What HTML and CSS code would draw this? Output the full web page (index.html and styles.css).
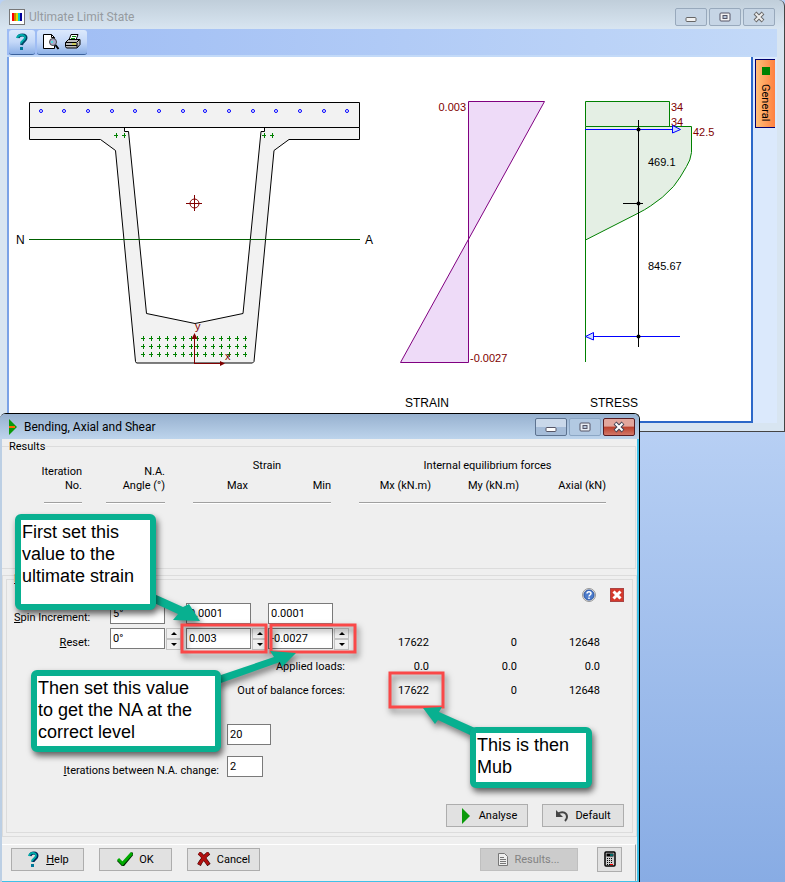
FILE: index.html
```
<!DOCTYPE html>
<html lang="en">
<head>
    <meta charset="UTF-8">
    <title>Ultimate Limit State</title>
    <link rel="stylesheet" href="styles.css">
</head>
<body>
<div class="desktop">

    <div class="window main-window">
        <div class="title-bar inactive">
            <svg class="title-icon" width="16" height="16" viewBox="0 0 16 16">
                <rect x="0.5" y="0.5" width="15" height="15" fill="#fff" stroke="#777"/>
                <path d="M3 4h2v8H3z" fill="#f00"/>
                <path d="M5 4h2v8H5z" fill="#c80"/>
                <path d="M7 4h2v8H7z" fill="#dd0"/>
                <path d="M9 4h2v8H9z" fill="#0cc"/>
                <path d="M11 4h2v8h-2z" fill="#009"/>
            </svg>
            <span class="title-text">Ultimate Limit State</span>
            <div class="title-buttons">
                <button type="button" aria-label="Minimize"><svg width="12" height="12" viewBox="0 0 12 12"><rect x="1" y="6.5" width="10" height="4" rx="1" fill="#f2f2f2" stroke="#666"/></svg></button>
                <button type="button" aria-label="Maximize"><svg width="12" height="12" viewBox="0 0 12 12"><rect x="1" y="2" width="10" height="8" rx="1" fill="#f2f2f2" stroke="#556"/><rect x="4" y="4.5" width="4" height="3" fill="#b8c8dc" stroke="#556"/></svg></button>
                <button type="button" aria-label="Close"><svg width="12" height="12" viewBox="0 0 12 12"><path d="M2 2l8 8M10 2l-8 8" stroke="#666" stroke-width="4"/><path d="M2.500 2.500l7 7M9.500 2.500l-7 7" stroke="#eee" stroke-width="2"/></svg></button>
            </div>
        </div>
        <div class="toolbar">
            <div class="tool-group">
                <button type="button" aria-label="Help">
                    <svg width="16" height="18" viewBox="0 0 16 18"><path d="M4 5C5 1 12 1 12 5c0 3-4 3-4.500 7" fill="none" stroke="#046" stroke-width="3"/><path d="M3 5C4 1 11 1 11 4.500c0 3-4 3-4 6" fill="none" stroke="#0aa" stroke-width="2"/><path d="M6 14h3v3H6z" fill="#079"/></svg>
                </button>
            </div>
            <div class="tool-group">
                <button type="button" aria-label="Print preview">
                    <svg width="18" height="18" viewBox="0 0 18 18"><path d="M1.500 1.500h8l3 3v11h-11z" fill="#fff" stroke="#000"/><path d="M9.500 1.500v3h3" fill="none" stroke="#000"/><circle cx="11" cy="9" r="3.500" fill="#aac" stroke="#444"/><path d="M9 8h2v2H9z" fill="#5dd"/><path d="M13.500 12l3 4" stroke="#000" stroke-width="2"/></svg>
                </button>
                <button type="button" aria-label="Print">
                    <svg width="18" height="18" viewBox="0 0 18 18"><path d="M5 7l2-5.500h7L12 7" fill="#fff" stroke="#000"/><path d="M8 3.500h4M7 5.500h4" stroke="#080"/><path d="M1.500 9.500l3-3H16v5l-3 3.500H2.500l-1-1.500z" fill="#bbb" stroke="#000"/><path d="M1.500 9.500h11l3-3M2 12.500h11M13 10v4.500" fill="none" stroke="#000"/><path d="M8 11h4" stroke="#dd0"/></svg>
                </button>
            </div>
        </div>
        <div class="work-area">
            <div class="canvas">
                <svg class="drawing" width="742" height="365" viewBox="9 57 742 365">
                    <defs>
                        <pattern id="strand" x="139" y="334" width="8" height="8" patternUnits="userSpaceOnUse">
                            <path d="M2 4.500h4M4.500 2v5" stroke="#008000"/>
                        </pattern>
                    </defs>

                    <!-- beam and slab -->
                    <g fill="#f2f2f2" stroke="#000">
                        <path d="M29.500 127.500v12h71l15 11 20 211 1 1.500h116l1.500-1.500 20-211 15-11h70.500v-12z"/>
                        <path d="M124.500 127.500v4h4l18 182 48.500 10 48-10 18-182h3.500v-4z" fill="#fff"/>
                        <path d="M29.500 102.500h330v25h-330z"/>
                    </g>
                    <g fill="#fff" stroke="#0000ff">
                        <circle cx="41" cy="111" r="1.500"/><circle cx="64" cy="111" r="1.500"/>
                        <circle cx="88" cy="111" r="1.500"/><circle cx="112" cy="111" r="1.500"/>
                        <circle cx="135" cy="111" r="1.500"/><circle cx="159" cy="111" r="1.500"/>
                        <circle cx="183" cy="111" r="1.500"/><circle cx="205" cy="111" r="1.500"/>
                        <circle cx="229" cy="111" r="1.500"/><circle cx="253" cy="111" r="1.500"/>
                        <circle cx="276" cy="111" r="1.500"/><circle cx="300" cy="111" r="1.500"/>
                        <circle cx="324" cy="111" r="1.500"/><circle cx="347" cy="111" r="1.500"/>
                    </g>
                    <path d="M114 135.500h4M116.500 133v5M122 135.500h4M124.500 133v5M262 135.500h4M264.500 133v5M270 135.500h4M272.500 133v5" stroke="#008000"/>
                    <rect x="139" y="334" width="56" height="24" fill="url(#strand)"/>
                    <g transform="translate(54 0)"><rect x="139" y="334" width="56" height="24" fill="url(#strand)"/></g>

                    <!-- neutral axis, centroid, axes -->
                    <path d="M29 239.500h331" stroke="#006000"/>
                    <g stroke="#800000" fill="none">
                        <circle cx="194.500" cy="203.500" r="4.500"/>
                        <path d="M186 203.500h16M194.500 195v16M194.500 363V336M194 363.500h27"/>
                        <path d="M194.500 333l3 6h-6zM225 363.500l-5-2.500v5z" fill="#800000" stroke="none"/>
                    </g>
                    <g class="axis-label">
                        <text x="16" y="244">N</text>
                        <text x="365" y="244">A</text>
                    </g>
                    <g class="value">
                        <text x="195" y="330">y</text>
                        <text x="225" y="360">x</text>
                    </g>

                    <!-- strain -->
                    <path d="M468.500 101.500h76l-144 261h68z" fill="#eedbf8" stroke="#800080"/>
                    <g class="value">
                        <text x="466" y="111" text-anchor="end">0.003</text>
                        <text x="470" y="362">-0.0027</text>
                    </g>

                    <!-- stress -->
                    <g fill="#e4efe4" stroke="#008000">
                        <path d="M585.500 101.500h84v25h-84z"/>
                        <path d="M585.500 126.500h106v26q-1 8-5 14-6 11-13 20-11 12-23 19.500-6 4-12 7l-53 27z"/>
                        <path d="M585.500 239v123"/>
                    </g>
                    <g class="value">
                        <text x="671" y="111">34</text>
                        <text x="671" y="126">34</text>
                        <text x="693" y="136">42.5</text>
                    </g>
                    <g stroke="#0000ff" fill="#ccdcff">
                        <path d="M585 129.500h88M594 336.500h86"/>
                        <path d="M672.500 125.500v7.500l8-3.500zM593.500 332.500v7.500l-8-3.500z"/>
                    </g>
                    <path d="M638.500 120v227M623 203.500h20" stroke="#000"/>
                    <circle cx="638.500" cy="129.500" r="2"/>
                    <circle cx="638.500" cy="203.500" r="2"/>
                    <circle cx="638.500" cy="336.500" r="2"/>
                    <g class="dimension">
                        <text x="648" y="166">469.1</text>
                        <text x="648" y="270">845.67</text>
                    </g>
                    <g class="axis-label">
                        <text x="405" y="407">STRAIN</text>
                        <text x="590" y="407">STRESS</text>
                    </g>
                </svg>
            </div>
            <div class="side-tabs">
                <button type="button" class="side-tab"><span class="tab-mark"></span>General</button>
            </div>
        </div>
    </div>

    <div class="window dialog">
        <div class="title-bar">
            <svg class="title-icon" width="16" height="16" viewBox="0 0 16 16">
                <path d="M2 0l8 8-8 8z" fill="#0a9a0a"/>
                <path d="M2 7h6v2H2z" fill="#f60"/>
            </svg>
            <span class="title-text">Bending, Axial and Shear</span>
            <div class="title-buttons">
                <button type="button" aria-label="Minimize"><svg width="12" height="12" viewBox="0 0 12 12"><rect x="1" y="6.500" width="10" height="4" rx="1" fill="#fff" stroke="#556"/></svg></button>
                <button type="button" class="dim" aria-label="Maximize"><svg width="12" height="12" viewBox="0 0 12 12"><rect x="1" y="2" width="10" height="8" rx="1" fill="#e8eef4" stroke="#556"/><rect x="4" y="4.500" width="4" height="3" fill="#b8c8dc" stroke="#556"/></svg></button>
                <button type="button" class="close" aria-label="Close"><svg width="12" height="12" viewBox="0 0 12 12"><path d="M2 2l8 8M10 2l-8 8" stroke="#445" stroke-width="4"/><path d="M2.500 2.500l7 7M9.500 2.500l-7 7" stroke="#fff" stroke-width="2"/></svg></button>
            </div>
        </div>

        <fieldset class="results">
            <legend>Results</legend>
            <table class="results-table">
                <colgroup>
                    <col class="col-iteration"><col class="col-angle"><col class="col-strain"><col class="col-strain">
                    <col class="col-mx"><col class="col-my"><col class="col-axial">
                </colgroup>
                <tr>
                    <th rowspan="2">Iteration<br>No.</th>
                    <th rowspan="2">N.A.<br>Angle (°)</th>
                    <th colspan="2" class="group">Strain</th>
                    <th colspan="3" class="group">Internal equilibrium forces</th>
                </tr>
                <tr>
                    <th>Max</th>
                    <th>Min</th>
                    <th>Mx (kN.m)</th>
                    <th>My (kN.m)</th>
                    <th>Axial (kN)</th>
                </tr>
                <tr class="rules">
                    <td class="first"><hr></td>
                    <td class="second"><hr></td>
                    <td colspan="2"><hr></td>
                    <td colspan="3"><hr></td>
                </tr>
            </table>
        </fieldset>

        <fieldset class="settings">
            <legend><u>I</u></legend>
            <div class="corner-buttons">
                <button type="button" aria-label="Help on iteration">
                    <svg width="14" height="14" viewBox="0 0 14 14"><circle cx="7" cy="7" r="6.500" fill="#ddd" stroke="#999"/><circle cx="7" cy="7" r="5" fill="#4c7ccc" stroke="#2a55a5"/><path d="M5 5.500c0-2.500 4-2.500 4 0 0 1.500-2 1.500-2 3M7 9.500v1.500" fill="none" stroke="#fff" stroke-width="1.500"/></svg>
                </button>
                <button type="button" aria-label="Close panel">
                    <svg width="14" height="14" viewBox="0 0 14 14"><rect x="0.500" y="0.500" width="13" height="13" fill="#d5392c" stroke="#a44"/><path d="M3.500 3.500l7 7M10.500 3.500l-7 7" stroke="#fff" stroke-width="3"/></svg>
                </button>
            </div>
            <div class="form-grid">
                <label for="spin-angle"><u>S</u>pin Increment:</label>
                <input type="text" id="spin-angle" class="angle" value="5°">
                <input type="text" value="0.0001" aria-label="Maximum strain increment">
                <input type="text" value="0.0001" aria-label="Minimum strain increment">

                <label for="reset-angle" class="row-start"><u>R</u>eset:</label>
                <div class="spin-field">
                    <input type="text" id="reset-angle" class="angle" value="0°">
                    <div class="spinner"><button type="button" class="up" aria-label="Angle up"></button><button type="button" class="down" aria-label="Angle down"></button></div>
                </div>
                <div class="spin-field">
                    <input type="text" value="0.003" aria-label="Maximum strain">
                    <div class="spinner"><button type="button" class="up" aria-label="Maximum strain up"></button><button type="button" class="down" aria-label="Maximum strain down"></button></div>
                </div>
                <div class="spin-field">
                    <input type="text" value="-0.0027" aria-label="Minimum strain">
                    <div class="spinner"><button type="button" class="up" aria-label="Minimum strain up"></button><button type="button" class="down" aria-label="Minimum strain down"></button></div>
                </div>
                <output>17622</output>
                <output>0</output>
                <output>12648</output>

                <span class="row-label">Applied loads:</span>
                <output>0.0</output>
                <output>0.0</output>
                <output>0.0</output>

                <span class="row-label">Out of balance forces:</span>
                <output>17622</output>
                <output>0</output>
                <output>12648</output>
            </div>
            <div class="limits">
                <input type="text" class="iterations" value="20" aria-label="Maximum iterations">
                <label for="na-change"><u>I</u>terations between N.A. change:</label>
                <input type="text" id="na-change" class="na-change" value="2">
            </div>
            <div class="settings-buttons">
                <button type="button" class="button">
                    <svg width="16" height="16" viewBox="0 0 16 16"><path d="M5 0l8 8-8 8z" fill="#0a9a0a"/></svg>
                    Analyse
                </button>
                <button type="button" class="button">
                    <svg width="14" height="14" viewBox="0 0 14 14"><path d="M3 4.500C8 1.500 12 4 12 8c0 2-1 3-2 4" fill="none" stroke="#444" stroke-width="2"/><path d="M1 1v7h7z" fill="#444"/></svg>
                    Default
                </button>
            </div>
        </fieldset>

        <div class="button-bar">
            <button type="button" class="button">
                <svg width="14" height="16" viewBox="0 0 14 16"><path d="M4 5C5 1 11 1 11 5c0 3-4 3-4 6" fill="none" stroke="#025" stroke-width="3"/><path d="M3 5C4 1 10 1 10 4.500c0 3-4 3-4 6" fill="none" stroke="#0aa" stroke-width="2"/><path d="M5 13h3v3H5z" fill="#079"/></svg>
                <span><u>H</u>elp</span>
            </button>
            <button type="button" class="button">
                <svg width="16" height="14" viewBox="0 0 16 14"><path d="M1 8l5 5L16 1" fill="none" stroke="#020" stroke-width="3"/><path d="M1 7l4.500 4.500L15 1" fill="none" stroke="#0a0" stroke-width="3"/></svg>
                OK
            </button>
            <button type="button" class="button">
                <svg width="14" height="14" viewBox="0 0 14 14"><path d="M2 1c4 3 7 8 10 12M12 1C8 4 4 9 2 13" fill="none" stroke="#300" stroke-width="4"/><path d="M2 1c4 3 7 8 9.500 11.500M11.500 1C8 4 4 9 2 12.500" fill="none" stroke="#b01010" stroke-width="3"/></svg>
                Cancel
            </button>
            <button type="button" class="button results-button" disabled>
                <svg width="10" height="13" viewBox="0 0 10 13"><path d="M0.500 0.500h6l3 3v9h-9z" fill="#eee" stroke="#777"/><path d="M2 4.500h4M2 6.500h6M2 8.500h6M2 10.500h6" stroke="#777"/></svg>
                Results...
            </button>
            <button type="button" class="button calc-button" aria-label="Calculator">
                <svg width="12" height="16" viewBox="0 0 12 16"><rect x="1" y="1" width="10" height="14" rx="1" fill="#ccc" stroke="#000" stroke-width="1.500"/><path d="M2.500 2.500h7v3h-7z" fill="#000"/><path d="M6 4h3" stroke="#0cc"/><path d="M3 7.500h6M3 9.500h6M3 11.500h6M3 13.500h3" stroke="#000" stroke-dasharray="1 1"/><path d="M6 13.500h3" stroke="#f00"/></svg>
            </button>
        </div>

        <!-- notes pinned over the dialog -->
        <svg class="note-arrows" width="640" height="469" viewBox="0 413 640 469">
            <g class="highlight">
                <rect x="182" y="625" width="84" height="27"/>
                <rect x="271" y="625" width="84" height="27"/>
                <rect x="390" y="673" width="53" height="34"/>
            </g>
            <g class="arrow">
                <path d="M154 594l29 13 6-3 11 17-27-1 5-6-24-11z"/>
                <path d="M218 676l56-19-4-6 26 2-14 14-2-5-62 22z"/>
                <path d="M423 708l19-1-3 5 36 16-5 7-32-15-3 4z"/>
            </g>
        </svg>
        <div class="note note-max">First set this value to the ultimate strain</div>
        <div class="note note-min">Then set this value<br>to get the NA at the<br>correct level</div>
        <div class="note note-mub">This is then Mub</div>
    </div>

</div>
</body>
</html>
```
FILE: styles.css
```
* {
    box-sizing: border-box;
}

html, body {
    height: 100%;
    margin: 0;
}

body, button, input {
    font-family: Roboto, "Noto Sans", sans-serif;
    font-size: 11px;
    color: #000;
}

button {
    margin: 0;
    padding: 0;
    border: 0;
    background: none;
}

.desktop {
    position: relative;
    min-height: 100%;
    overflow: hidden;
    background: linear-gradient(#b8d0f4 48%, #88ace4);
}

.window {
    position: absolute;
    display: flex;
    flex-direction: column;
    left: 0;
}

/* title bars */
.title-bar {
    display: flex;
    align-items: center;
    height: 25px;
    padding: 1px 4px 0 7px;
    background: linear-gradient(#97b1cf, #bdd4ec);
}

.title-icon {
    flex: none;
}

.title-text {
    flex: 1;
    margin-left: 1px;
    font-size: 12px;
}

.title-buttons {
    display: flex;
    gap: 2px;
}

.title-buttons button {
    display: flex;
    align-items: center;
    justify-content: center;
    width: 32px;
    height: 18px;
    border: 1px solid #5d7390;
    border-radius: 2px;
    background: linear-gradient(#c9d8ea 48%, #a5bcd8 52%);
}

.title-buttons button.dim {
    border-color: #8ba6c4;
    background: #b2c9e2;
}

.title-buttons button.close {
    border-color: #581c22;
    background: linear-gradient(#e2a69c 45%, #bb3f2b 50%, #d27768);
}

.title-bar.inactive {
    height: 29px;
    padding: 5px 2px 0 2px;
    background: linear-gradient(#c0ceda, #d8e5f1);
}

.inactive .title-text {
    margin-left: 4px;
    color: #969ba0;
}

.inactive .title-buttons button {
    border-color: #98a9bc;
    background: #c6d5e5;
}

/* main window */
.main-window {
    top: 0;
    right: 0;
    height: 432px;
    padding: 0 7px 8px;
    border-right: 1px solid #444;
    border-bottom: 1px solid #444;
    border-radius: 6px 6px 0 0;
    background: linear-gradient(#c0ceda, #d8e5f1 29px);
}

.toolbar {
    display: flex;
    gap: 2px;
    height: 28px;
    padding: 1px 2px 2px;
    border-bottom: 2px solid #c3daf8;
    background: linear-gradient(90deg, #9ebcf4, #c3d9f8);
}

.tool-group {
    display: flex;
    align-items: center;
    gap: 4px;
    height: 25px;
    padding: 0 5px;
    border-bottom: 1px solid #3b619c;
    border-radius: 3px;
    background: linear-gradient(#dce9fc, #c4d8f8 50%, #8cb0e6);
}

.tool-group svg {
    display: block;
}

.work-area {
    display: flex;
    flex: 1;
    min-height: 0;
    background: #dbe9fc;
}

.canvas {
    flex: 1;
    overflow: hidden;
    border: solid #2c68c8;
    border-width: 0 2px 2px;
    border-left-color: #7aa2e6;
    background: #fff;
}

.drawing {
    display: block;
    font-family: "Liberation Sans", Arial, sans-serif;
    font-size: 11px;
}

.axis-label {
    font-size: 12px;
}

.value {
    fill: #800000;
}

.side-tabs {
    width: 24px;
    padding: 2px 2px 0;
}

.side-tab {
    display: flex;
    align-items: center;
    gap: 9px;
    height: 69px;
    width: 20px;
    padding: 7px 0;
    border: 1px solid #000070;
    border-right: 0;
    background: linear-gradient(90deg, #ffc078, #ff8040);
    writing-mode: vertical-rl;
}

.tab-mark {
    flex: none;
    width: 8px;
    height: 8px;
    background: #008000;
}

/* dialog */
.dialog {
    top: 413px;
    bottom: 0;
    width: 640px;
    border: solid #000;
    border-width: 1px 1px 0 0;
    border-radius: 6px 6px 0 0;
    background: #efefef;
    box-shadow: inset 2px 0 #bccfe4, inset -2px -1px #40c0e8;
}

.dialog .title-bar {
    border-radius: 5px 5px 0 0;
}

fieldset {
    margin: 0;
    border: 1px solid #dcdcdc;
}

legend {
    padding: 0;
}

.results {
    height: 130px;
    margin: 0 3px 0 2px;
    padding: 5px 0 0 30px;
    border-left: 0;
}

.results legend {
    height: 15px;
    margin-left: -23px;
    line-height: 15px;
}

.results-table {
    table-layout: fixed;
    width: 574px;
    border-collapse: collapse;
}

.results-table th {
    padding: 0;
    font-weight: normal;
    line-height: 14px;
    text-align: right;
    vertical-align: bottom;
}

.results-table tr:first-child th {
    height: 20px;
}

.results-table th.group {
    padding: 0 0 6px 38px;
    text-align: center;
    vertical-align: top;
}

.results-table td {
    padding: 9px 0 0 28px;
}

.results-table td.first {
    padding-left: 12px;
}

.results-table td.second {
    padding-left: 24px;
}

.results-table hr {
    margin: 0;
    border: 0;
    border-top: 1px solid #a0a0a0;
    border-bottom: 1px solid #fff;
}

.col-iteration {
    width: 50px;
}

.col-angle, .col-strain {
    width: 83px;
}

.col-mx {
    width: 100px;
}

.col-my {
    width: 88px;
}

.col-axial {
    width: 87px;
}

.settings {
    flex: 1;
    min-height: 0;
    margin: 3px 6px 11px 6px;
    padding: 0 0 0 7px;
    box-shadow: 0 0 0 3px #efefef, 0 0 0 4px #dcdcdc;
}

.settings legend {
    height: 15px;
    color: #800000;
}

.corner-buttons {
    display: flex;
    justify-content: flex-end;
    gap: 14px;
    height: 16px;
    padding-right: 8px;
}

.corner-buttons svg {
    display: block;
}

.form-grid {
    display: grid;
    grid-template-columns: 96px 76px 82px 82px 79px 88px 83px;
    grid-template-rows: 25px 24px 24px 24px;
    align-items: start;
}

.form-grid label, .row-label, output {
    padding-top: 8px;
    line-height: 14px;
    text-align: right;
    white-space: nowrap;
}

.form-grid label {
    padding-right: 20px;
}

.row-start {
    grid-column: 1;
}

.row-label {
    grid-column: 1 / 5;
    padding-right: 5px;
}

input {
    width: 65px;
    height: 21px;
    padding: 0 4px 1px 2px;
    border: 1px solid #7a7a7a;
    background: #fff;
    outline: none;
}

input.angle {
    width: 55px;
}

.spin-field {
    display: flex;
    gap: 1px;
}

.spinner {
    display: flex;
    flex-direction: column;
    width: 15px;
    height: 22px;
}

.spinner button {
    display: flex;
    flex: 1;
    align-items: center;
    justify-content: center;
    border: 1px solid #c4c4c4;
    background: #f0f0f0;
}

.spinner button::before {
    content: "";
    border: 3px solid transparent;
}

.spinner .up::before {
    border-top: 0;
    border-bottom-color: #000;
}

.spinner .down::before {
    border-bottom: 0;
    border-top-color: #000;
}

.limits {
    display: grid;
    grid-template-columns: 205px auto;
    grid-template-rows: 32px 32px;
    gap: 0 8px;
    justify-content: start;
    margin-top: 24px;
}

.limits label {
    padding-top: 8px;
    line-height: 14px;
    text-align: right;
}

.limits .iterations {
    grid-column: 2;
    width: 44px;
}

.limits .na-change {
    width: 36px;
}

.settings-buttons {
    display: flex;
    justify-content: flex-end;
    gap: 14px;
    margin-top: 16px;
    padding-right: 8px;
}

.button {
    display: flex;
    align-items: center;
    justify-content: center;
    gap: 6px;
    width: 73px;
    height: 23px;
    border: 1px solid #adadad;
    background: #e1e1e1;
}

.settings-buttons .button {
    width: 82px;
}

.button:disabled {
    border-color: #bfbfbf;
    background: #ccc;
    color: #838383;
}

.button-bar {
    display: flex;
    align-items: center;
    gap: 15px;
    height: 37px;
    margin: 0 3px 1px 2px;
    padding: 0 13px 8px 9px;
    border-top: 1px solid #fff;
    border-right: 1px solid #999;
}

.results-button {
    width: 98px;
    margin-left: auto;
}

.calc-button {
    width: 25px;
    height: 25px;
    margin-left: 4px;
}

/* notes */
.note-arrows {
    position: absolute;
    top: -1px;
    left: 0;
    filter: drop-shadow(2px 4px 3px rgba(0, 0, 0, 0.5));
    pointer-events: none;
}

.highlight {
    fill: none;
    stroke: #fa4848;
    stroke-width: 3;
}

.arrow {
    fill: #08b090;
}

.note {
    position: absolute;
    border: 6px solid #08b090;
    border-radius: 6px;
    padding: 1px 0 0 1px;
    background: #fff;
    box-shadow: 2px 4px 6px rgba(0, 0, 0, 0.6);
    font-family: "Liberation Sans", Arial, sans-serif;
    font-size: 18px;
    line-height: 22px;
}

.note-max {
    top: 100px;
    left: 15px;
    width: 141px;
    height: 96px;
}

.note-min {
    top: 256px;
    left: 31px;
    width: 190px;
    height: 82px;
}

.note-mub {
    top: 313px;
    left: 470px;
    width: 122px;
    height: 61px;
}
```
